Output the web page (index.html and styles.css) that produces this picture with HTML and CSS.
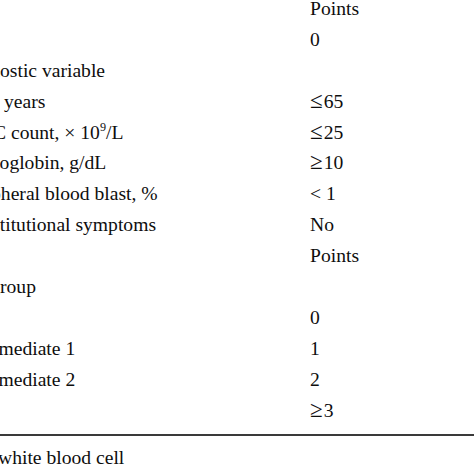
FILE: index.html
```html
<!DOCTYPE html>
<html>
<head>
<meta charset="utf-8">
<link rel="stylesheet" href="styles.css">
</head>
<body>
<div class="page">
  <div class="table">
    <div class="lbl"></div><div class="val">Points</div>
    <div class="lbl"></div><div class="val">0</div>
    <div class="lbl">Prognostic variable</div><div class="val"></div>
    <div class="lbl sub">Age, years</div><div class="val"><span class="rel">≤</span>65</div>
    <div class="lbl sub">WBC count, × 10<sup>9</sup>/L</div><div class="val"><span class="rel">≤</span>25</div>
    <div class="lbl sub">Hemoglobin, g/dL</div><div class="val"><span class="rel">≥</span>10</div>
    <div class="lbl sub left2">Peripheral blood blast, %</div><div class="val">&lt; 1</div>
    <div class="lbl sub left2">Constitutional symptoms</div><div class="val">No</div>
    <div class="lbl"></div><div class="val">Points</div>
    <div class="lbl grp">Risk group</div><div class="val"></div>
    <div class="lbl sub">Low</div><div class="val">0</div>
    <div class="lbl sub">Intermediate 1</div><div class="val">1</div>
    <div class="lbl sub">Intermediate 2</div><div class="val">2</div>
    <div class="lbl"></div><div class="val"><span class="rel">≥</span>3</div>
  </div>
  <div class="rule"></div>
  <div class="foot">WBC white blood cell</div>
</div>
</body>
</html>
```
FILE: styles.css
```css
html, body {
  margin: 0;
  padding: 0;
  background: #ffffff;
  overflow: hidden;
}
.page {
  width: 474px;
  height: 474px;
  overflow: hidden;
  font-family: "Liberation Serif", "Times New Roman", serif;
  font-size: 19.6px;
  color: #0e0e0e;
}
.table {
  display: grid;
  grid-template-columns: 356.8px 1fr;
  grid-auto-rows: 30.9px;
  line-height: 30.9px;
  margin-left: -46.8px;
  margin-top: -6px;
}
.lbl, .val {
  white-space: nowrap;
}
.sub {
  padding-left: 8.3px;
}
.left2 {
  margin-left: -2px;
}
.grp {
  margin-left: -3.8px;
}
.rel {
  font-size: 1.18em;
  line-height: 0;
  margin-right: 1px;
}
sup {
  font-size: 0.62em;
  line-height: 0;
  vertical-align: 0.62em;
}
.rule {
  margin-top: 7.4px;
  height: 0;
  border-top: 2px solid #3a3a3a;
}
.foot {
  margin-left: -51.5px;
  padding-top: 7px;
  line-height: 30.9px;
  white-space: nowrap;
}
```
